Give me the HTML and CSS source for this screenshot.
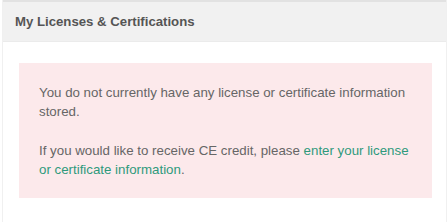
FILE: index.html
```html
<!DOCTYPE html>
<html lang="en">
<head>
    <meta charset="UTF-8">
    <meta name="viewport" content="width=device-width, initial-scale=1.0">
    <title>My Licenses &amp; Certifications</title>
    <link rel="stylesheet" href="styles.css">
</head>
<body>
    <div class="panel">
        <div class="panel-heading">
            <h3>My Licenses &amp; Certifications</h3>
        </div>
        <div class="panel-body">
            <div class="alert">
                <p>You do not currently have any license or certificate information stored.</p>
                <p>If you would like to receive CE credit, please <a href="#">enter your license or certificate information</a>.</p>
            </div>
        </div>
    </div>
</body>
</html>
```

FILE: styles.css
```css
/* CSS styles */
body {
    margin: 0;
    padding: 0;
    font-family: "Liberation Sans", Arial, sans-serif;
    background-color: #fff;
}

.panel {
    margin-left: 2px;
    border-left: 1px solid #f0f0f0;
    border-right: 1px solid #f0f0f0;
    height: 222px;
    box-sizing: border-box;
}

.panel-heading {
    height: 42px;
    box-sizing: border-box;
    background-color: #f1f1f1;
    border-top: 2px solid #e2e2e2;
    border-bottom: 1px solid #ebebeb;
    padding: 0 12px;
    display: flex;
    align-items: center;
}

.panel-heading h3 {
    margin: 0;
    font-size: 13.2px;
    font-weight: bold;
    color: #555;
}

.panel-body {
    padding: 21px 14px 0 16px;
}

.alert {
    background-color: #fce9eb;
    padding: 20px 20px 19px 20px;
    font-size: 13.3px;
    line-height: 19px;
    color: #666;
}

.alert p {
    margin: 0 0 20px 0;
}

.alert p:last-child {
    margin-bottom: 0;
}

.alert a {
    color: #2f9a7c;
    text-decoration: none;
}
```
